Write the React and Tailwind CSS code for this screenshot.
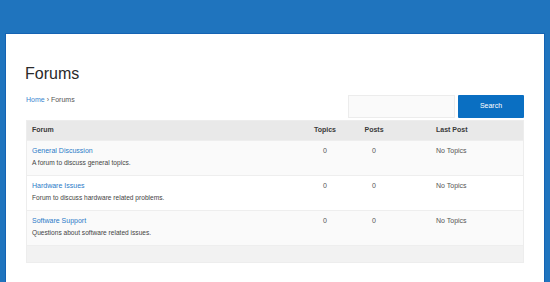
import React from 'react';

const forums = [
    {id: 1, name: 'General Discussion', description: 'A forum to discuss general topics.', topics: 0, posts: 0, lastPost: 'No Topics'},
    {id: 2, name: 'Hardware Issues', description: 'Forum to discuss hardware related problems.', topics: 0, posts: 0, lastPost: 'No Topics'},
    {id: 3, name: 'Software Support', description: 'Questions about software related issues.', topics: 0, posts: 0, lastPost: 'No Topics'},
];

const cols = "grid grid-cols-[274px_48px_50px_1fr]";

const App = () => {
    return (
        <div className="w-[550px] h-[282px] bg-[#1f74be] pt-[33px] px-[5px] overflow-hidden" style={{fontFamily: '"Liberation Sans", Arial, sans-serif'}}>
            <div className="h-full bg-white border border-b-0 border-[#1463b3] px-[20px] pt-[30px]">
                <h1 className="text-[16px] leading-[20px] text-[#2a2a2a] ml-[-1px]">Forums</h1>

                <div className="flex items-start justify-between mt-[11px]">
                    <div className="text-[7px] leading-[10px] text-[#555]">
                        <a href="#" className="text-[#3a86cf]">Home</a>
                        <span> › Forums</span>
                    </div>
                    <div className="flex gap-[3px]">
                        <input
                            type="text"
                            className="w-[107px] h-[23px] bg-[#fafafa] border border-[#ececec] outline-none"
                        />
                        <button className="w-[66px] h-[23px] bg-[#0a6fc2] text-white text-[7px] rounded-[1px]">
                            Search
                        </button>
                    </div>
                </div>

                <div className="mt-[2px] w-[498px] border border-[#ededed]">
                    <div className={`${cols} h-[19px] items-center bg-[#e9e9e9] text-[7px] font-bold text-[#3a3a3a]`}>
                        <div className="pl-[5px]">Forum</div>
                        <div className="text-center">Topics</div>
                        <div className="text-center">Posts</div>
                        <div className="pl-[37px]">Last Post</div>
                    </div>
                    {forums.map((forum, i) => (
                        <div
                            key={forum.id}
                            className={`${cols} h-[35px] pt-[5px] border-t border-[#eeeeee] text-[7px] text-[#555] ${i % 2 === 0 ? 'bg-[#fafafa]' : 'bg-white'}`}
                        >
                            <div className="pl-[5px]">
                                <a href="#" className="block leading-[9px] text-[#2b7bc8]">{forum.name}</a>
                                <p className="mt-[4px] text-[6.6px] leading-[8px] text-[#444]">{forum.description}</p>
                            </div>
                            <div className="text-center leading-[9px]">{forum.topics}</div>
                            <div className="text-center leading-[9px]">{forum.posts}</div>
                            <div className="pl-[37px] leading-[9px]">{forum.lastPost}</div>
                        </div>
                    ))}
                    <div className="h-[17px] bg-[#f2f2f2] border-t border-[#eeeeee]"></div>
                </div>
            </div>
        </div>
    );
};

export default App;
